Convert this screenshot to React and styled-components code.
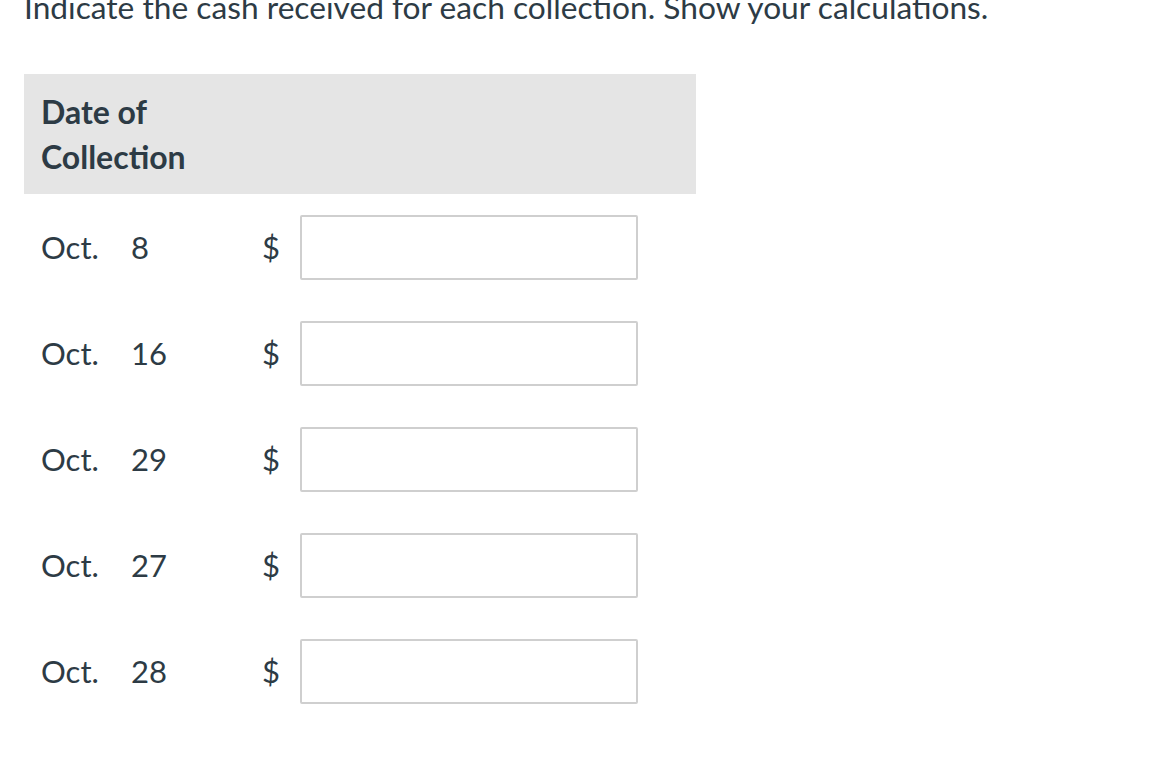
import React from "react";
import styled, { createGlobalStyle } from "styled-components";

const Global = createGlobalStyle`
  html, body { margin: 0; padding: 0; background: #fff; }
  body { font-family: Lato, "Noto Sans", sans-serif; color: #2d3b45; overflow: hidden; }
`;

const Page = styled.div`
  padding: 0 24px;
  width: 1166px;
  height: 770px;
  box-sizing: border-box;
  overflow: hidden;
`;

const Title = styled.p`
  margin: -13px 0 0 0;
  font-size: 31.7px;
  line-height: 40px;
  font-weight: 400;
  white-space: nowrap;
`;

const Table = styled.div`
  margin-top: 47px;
  width: 672px;
`;

const Header = styled.div`
  background: #e5e5e5;
  height: 120px;
  box-sizing: border-box;
  padding: 15px 17px 0;
  font-size: 32px;
  font-weight: 700;
  line-height: 45px;
`;

const Row = styled.div`
  display: grid;
  grid-template-columns: 90px 131px 38px 338px;
  align-items: center;
  height: 106px;
  padding-left: 17px;
  font-size: 31px;
`;

const Month = styled.span``;
const Day = styled.span``;
const Dollar = styled.span``;

const AmountInput = styled.input`
  box-sizing: border-box;
  width: 338px;
  height: 65px;
  border: 2px solid #cfcfcf;
  border-radius: 2px;
  background: #fff;
  outline: none;
  font: inherit;
  padding: 0 10px;
`;

const dates = ["8", "16", "29", "27", "28"];

export default function App() {
  return (
    <Page>
      <Global />
      <Title>Indicate the cash received for each collection. Show your calculations.</Title>
      <Table>
        <Header>
          Date of
          <br />
          Collection
        </Header>
        {dates.map((d) => (
          <Row key={d}>
            <Month>Oct.</Month>
            <Day>{d}</Day>
            <Dollar>$</Dollar>
            <AmountInput type="text" />
          </Row>
        ))}
      </Table>
    </Page>
  );
}
